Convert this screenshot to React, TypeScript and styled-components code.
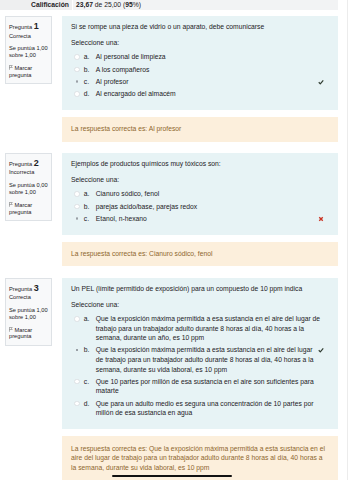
import React from 'react';
import styled, { createGlobalStyle } from 'styled-components';

const GlobalStyle = createGlobalStyle`
  html, body {
    margin: 0;
    padding: 0;
    background: #fff;
  }
  body {
    font-family: "Liberation Sans", Arial, sans-serif;
    color: #1d2125;
  }
`;

const Page = styled.div`
  width: 338px;
  padding-right: 9px;
  min-height: 480px;
  border-right: 1px solid #ececec;
`;

const GradeRow = styled.div`
  display: grid;
  grid-template-columns: 73px 1fr;
  height: 10px;
  font-size: 6.75px;
  line-height: 10px;
`;

const GradeLabel = styled.div`
  background: #eeeff0;
  text-align: right;
  font-weight: 700;
  padding-right: 3px;
  border-right: 1px solid #fff;
`;

const GradeValue = styled.div`
  background: #f2f3f4;
  padding-left: 3px;

  b {
    font-weight: 700;
  }
`;

const Question = styled.div<{ $first?: boolean }>`
  display: flex;
  align-items: flex-start;
  gap: 10px;
  margin: ${p => (p.$first ? '6px' : '11.4px')} 0 0 5px;
`;

const Info = styled.div`
  flex: none;
  box-sizing: border-box;
  width: 47px;
  padding: 4px 2px 5px 3px;
  background: #f8f9fa;
  border: 1px solid #dee2e6;
  font-size: 5.7px;
  line-height: 6.8px;
`;

const InfoTitle = styled.div`
  line-height: 10px;
  margin-bottom: 0.5px;

  b {
    font-size: 9px;
    font-weight: 700;
  }
`;

const InfoBlock = styled.div`
  margin-bottom: 6px;

  &:last-child {
    margin-bottom: 0;
  }
`;

const FlagIcon = styled.svg`
  width: 4px;
  height: 5px;
  margin-right: 1.5px;
  vertical-align: -0.5px;
`;

const Content = styled.div`
  flex: 1;
  min-width: 0;
  display: flex;
  flex-direction: column;
  font-size: 6.75px;
  line-height: 9.6px;
`;

const Formulation = styled.div`
  background: #e7f3f5;
  padding: 6px 9px 10px;
`;

const QText = styled.div`
  margin-bottom: 6.9px;
`;

const Prompt = styled.div`
  margin-bottom: 3.1px;
`;

const Option = styled.div`
  display: flex;
  align-items: flex-start;
  padding: 1.3px 0;
`;

const Radio = styled.span<{ $checked?: boolean }>`
  flex: none;
  box-sizing: border-box;
  width: 5.5px;
  height: 5.5px;
  margin: 2px 4px 0 3.25px;
  border-radius: 50%;
  background: ${p =>
    p.$checked ? 'radial-gradient(circle, #9aa0a6 0 1px, transparent 1.3px)' : '#fff'};
  border: ${p => (p.$checked ? 'none' : '0.5px solid #dde1e4')};
`;

const Letter = styled.span`
  flex: none;
  width: 12px;
`;

const OptionText = styled.span`
  flex: 1;
  min-width: 0;
`;

const Mark = styled.svg`
  flex: none;
  width: 6px;
  height: 6px;
  margin: 1.8px 5px 0 4px;
`;

const Feedback = styled.div`
  margin-top: 7px;
  background: #fcefdc;
  color: #8e662e;
  padding: 7.5px 9px;
`;

const HomeBar = styled.div`
  position: fixed;
  left: 112px;
  bottom: 3px;
  width: 120px;
  height: 2.5px;
  border-radius: 2px;
  background: #111;
`;

type Opt = { text: string; checked?: boolean; mark?: 'ok' | 'bad' };

type Q = {
  num: number;
  state: string;
  score: string;
  text: string;
  options: Opt[];
  answer: string;
};

const questions: Q[] = [
  {
    num: 1,
    state: 'Correcta',
    score: '1,00',
    text: 'Si se rompe una pieza de vidrio o un aparato, debe comunicarse',
    options: [
      { text: 'Al personal de limpieza' },
      { text: 'A los compañeros' },
      { text: 'Al profesor', checked: true, mark: 'ok' },
      { text: 'Al encargado del almacém' },
    ],
    answer: 'La respuesta correcta es: Al profesor',
  },
  {
    num: 2,
    state: 'Incorrecta',
    score: '0,00',
    text: 'Ejemplos de productos químicos muy tóxicos son:',
    options: [
      { text: 'Cianuro sódico, fenol' },
      { text: 'parejas ácido/base, parejas redox' },
      { text: 'Etanol, n-hexano', checked: true, mark: 'bad' },
    ],
    answer: 'La respuesta correcta es: Cianuro sódico, fenol',
  },
  {
    num: 3,
    state: 'Correcta',
    score: '1,00',
    text: 'Un PEL (límite permitido de exposición) para un compuesto de 10 ppm indica',
    options: [
      {
        text: 'Que la exposición máxima permitida a esa sustancia en el aire del lugar de trabajo para un trabajador adulto durante 8 horas al día, 40 horas a la semana, durante un año, es 10 ppm',
      },
      {
        text: 'Que la exposición máxima permitida a esta sustancia en el aire del lugar de trabajo para un trabajador adulto durante 8 horas al día, 40 horas a la semana, durante su vida laboral, es 10 ppm',
        checked: true,
        mark: 'ok',
      },
      { text: 'Que 10 partes por millón de esa sustancia en el aire son suficientes para matarte' },
      { text: 'Que para un adulto medio es segura una concentración de 10 partes por millón de esa sustancia en agua' },
    ],
    answer:
      'La respuesta correcta es: Que la exposición máxima permitida a esta sustancia en el aire del lugar de trabajo para un trabajador adulto durante 8 horas al día, 40 horas a la semana, durante su vida laboral, es 10 ppm',
  },
];

const letters = ['a.', 'b.', 'c.', 'd.'];

const CheckMark = () => (
  <Mark viewBox="0 0 12 12">
    <path d="M1.5 6.5 L4.6 9.6 L10.5 2.8" fill="none" stroke="#2f3b30" strokeWidth="2.4" strokeLinejoin="round" />
  </Mark>
);

const CrossMark = () => (
  <Mark viewBox="0 0 12 12">
    <path d="M2.5 2.5 L9.5 9.5 M9.5 2.5 L2.5 9.5" fill="none" stroke="#ca3120" strokeWidth="2.8" />
  </Mark>
);

export default function App() {
  return (
    <>
      <GlobalStyle />
      <Page>
        <GradeRow>
          <GradeLabel>Calificación</GradeLabel>
          <GradeValue>
            <b>23,67</b> de 25,00 (<b>95</b>%)
          </GradeValue>
        </GradeRow>

        {questions.map((q, qi) => (
          <Question key={q.num} $first={qi === 0}>
            <Info>
              <InfoTitle>
                Pregunta <b>{q.num}</b>
              </InfoTitle>
              <InfoBlock>{q.state}</InfoBlock>
              <InfoBlock>Se puntúa {q.score} sobre 1,00</InfoBlock>
              <InfoBlock>
                <FlagIcon viewBox="0 0 8 10">
                  <path d="M1 0.5 V9.5 M1 1 H6.5 L5 3 L6.5 5 H1" fill="none" stroke="#555" strokeWidth="0.9" />
                </FlagIcon>
                Marcar pregunta
              </InfoBlock>
            </Info>

            <Content>
              <Formulation>
                <QText>{q.text}</QText>
                <Prompt>Seleccione una:</Prompt>
                {q.options.map((o, i) => (
                  <Option key={i}>
                    <Radio $checked={o.checked} />
                    <Letter>{letters[i]}</Letter>
                    <OptionText>{o.text}</OptionText>
                    {o.mark === 'ok' && <CheckMark />}
                    {o.mark === 'bad' && <CrossMark />}
                  </Option>
                ))}
              </Formulation>
              <Feedback>{q.answer}</Feedback>
            </Content>
          </Question>
        ))}
      </Page>
      <HomeBar />
    </>
  );
}
